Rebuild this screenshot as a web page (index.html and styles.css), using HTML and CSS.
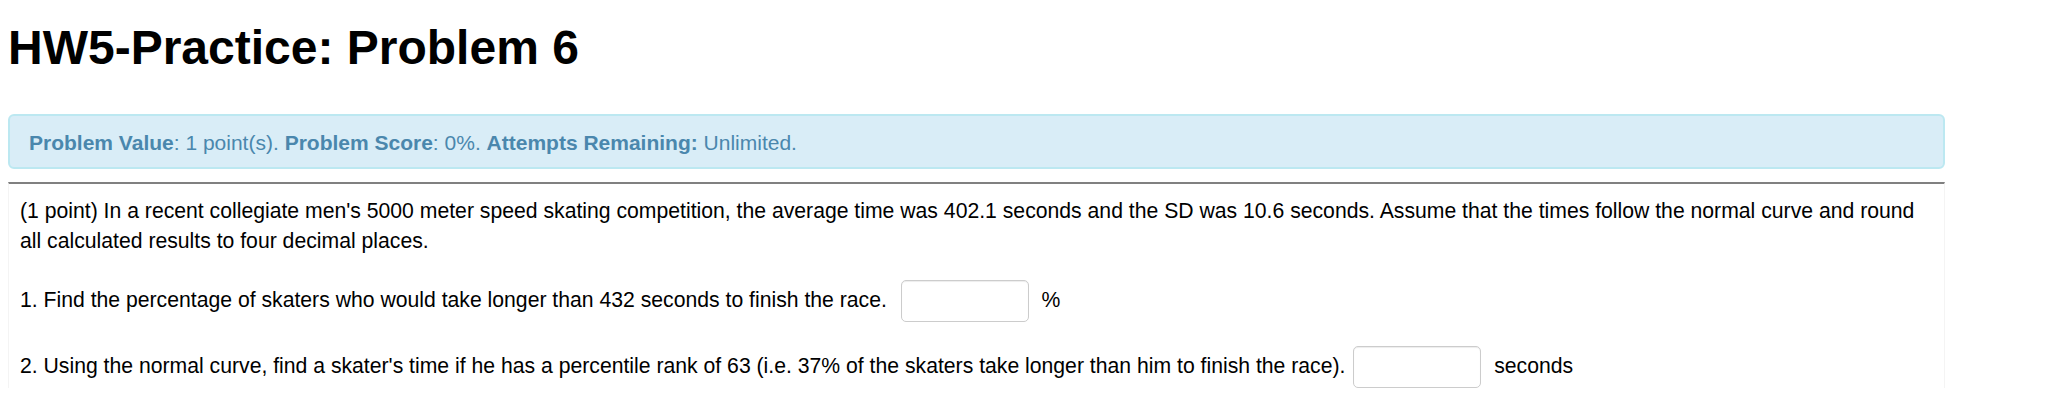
FILE: index.html
```html
<!DOCTYPE html>
<html lang="en">
<head>
  <meta charset="UTF-8">
  <title>HW5-Practice: Problem 6</title>
  <link rel="stylesheet" href="styles.css">
</head>
<body>

  <div class="page">
    <h1>HW5-Practice: Problem 6</h1>

    <div class="alert">
      <b>Problem Value</b>: 1 point(s). <b>Problem Score</b>: 0%. <b>Attempts Remaining:</b> Unlimited.
    </div>

    <div class="problem">
      <p>(1 point) In a recent collegiate men's 5000 meter speed skating competition, the average time was 402.1 seconds and the SD was 10.6 seconds. Assume that the times follow the normal curve and round all calculated results to four decimal places.</p>
      <p>1. Find the percentage of skaters who would take longer than 432 seconds to finish the race. &nbsp;<input type="text" class="answer"> %</p>
      <p>2. Using the normal curve, find a skater's time if he has a percentile rank of 63 (i.e. 37% of the skaters take longer than him to finish the race). <input type="text" class="answer"> seconds</p>
    </div>
  </div>

</body>
</html>
```

FILE: styles.css
```css
body {
  margin: 0;
  font-family: "Liberation Sans", Arial, sans-serif;
  color: #000;
  background: #fff;
}

.page {
  width: 1937px;
  margin-left: 8px;
}

h1 {
  font-size: 48px;
  line-height: 48px;
  font-weight: bold;
  margin: 0;
  padding: 24px 0 0 0;
}

.alert {
  margin-top: 42px;
  background-color: #d9edf7;
  border: 2px solid #bce8f1;
  border-radius: 6px;
  color: #4a87ad;
  font-size: 21px;
  line-height: 26px;
  padding: 14px 19px 11px;
}

.problem {
  margin-top: 13px;
  border-top: 2px solid #808080;
  border-left: 1px solid #f4f4f4;
  border-right: 1px solid #f4f4f4;
  padding: 12px 11px 0;
  font-size: 21.2px;
  line-height: 30px;
}

.problem p {
  margin: 0 0 24px;
}

.answer {
  width: 128px;
  height: 42px;
  box-sizing: border-box;
  border: 1px solid #ccc;
  border-radius: 5px;
  box-shadow: inset 0 1px 1px rgba(0, 0, 0, 0.075);
  vertical-align: middle;
  margin: 0 7px 0 2px;
  padding: 4px 8px;
  font-size: 20px;
}
```
